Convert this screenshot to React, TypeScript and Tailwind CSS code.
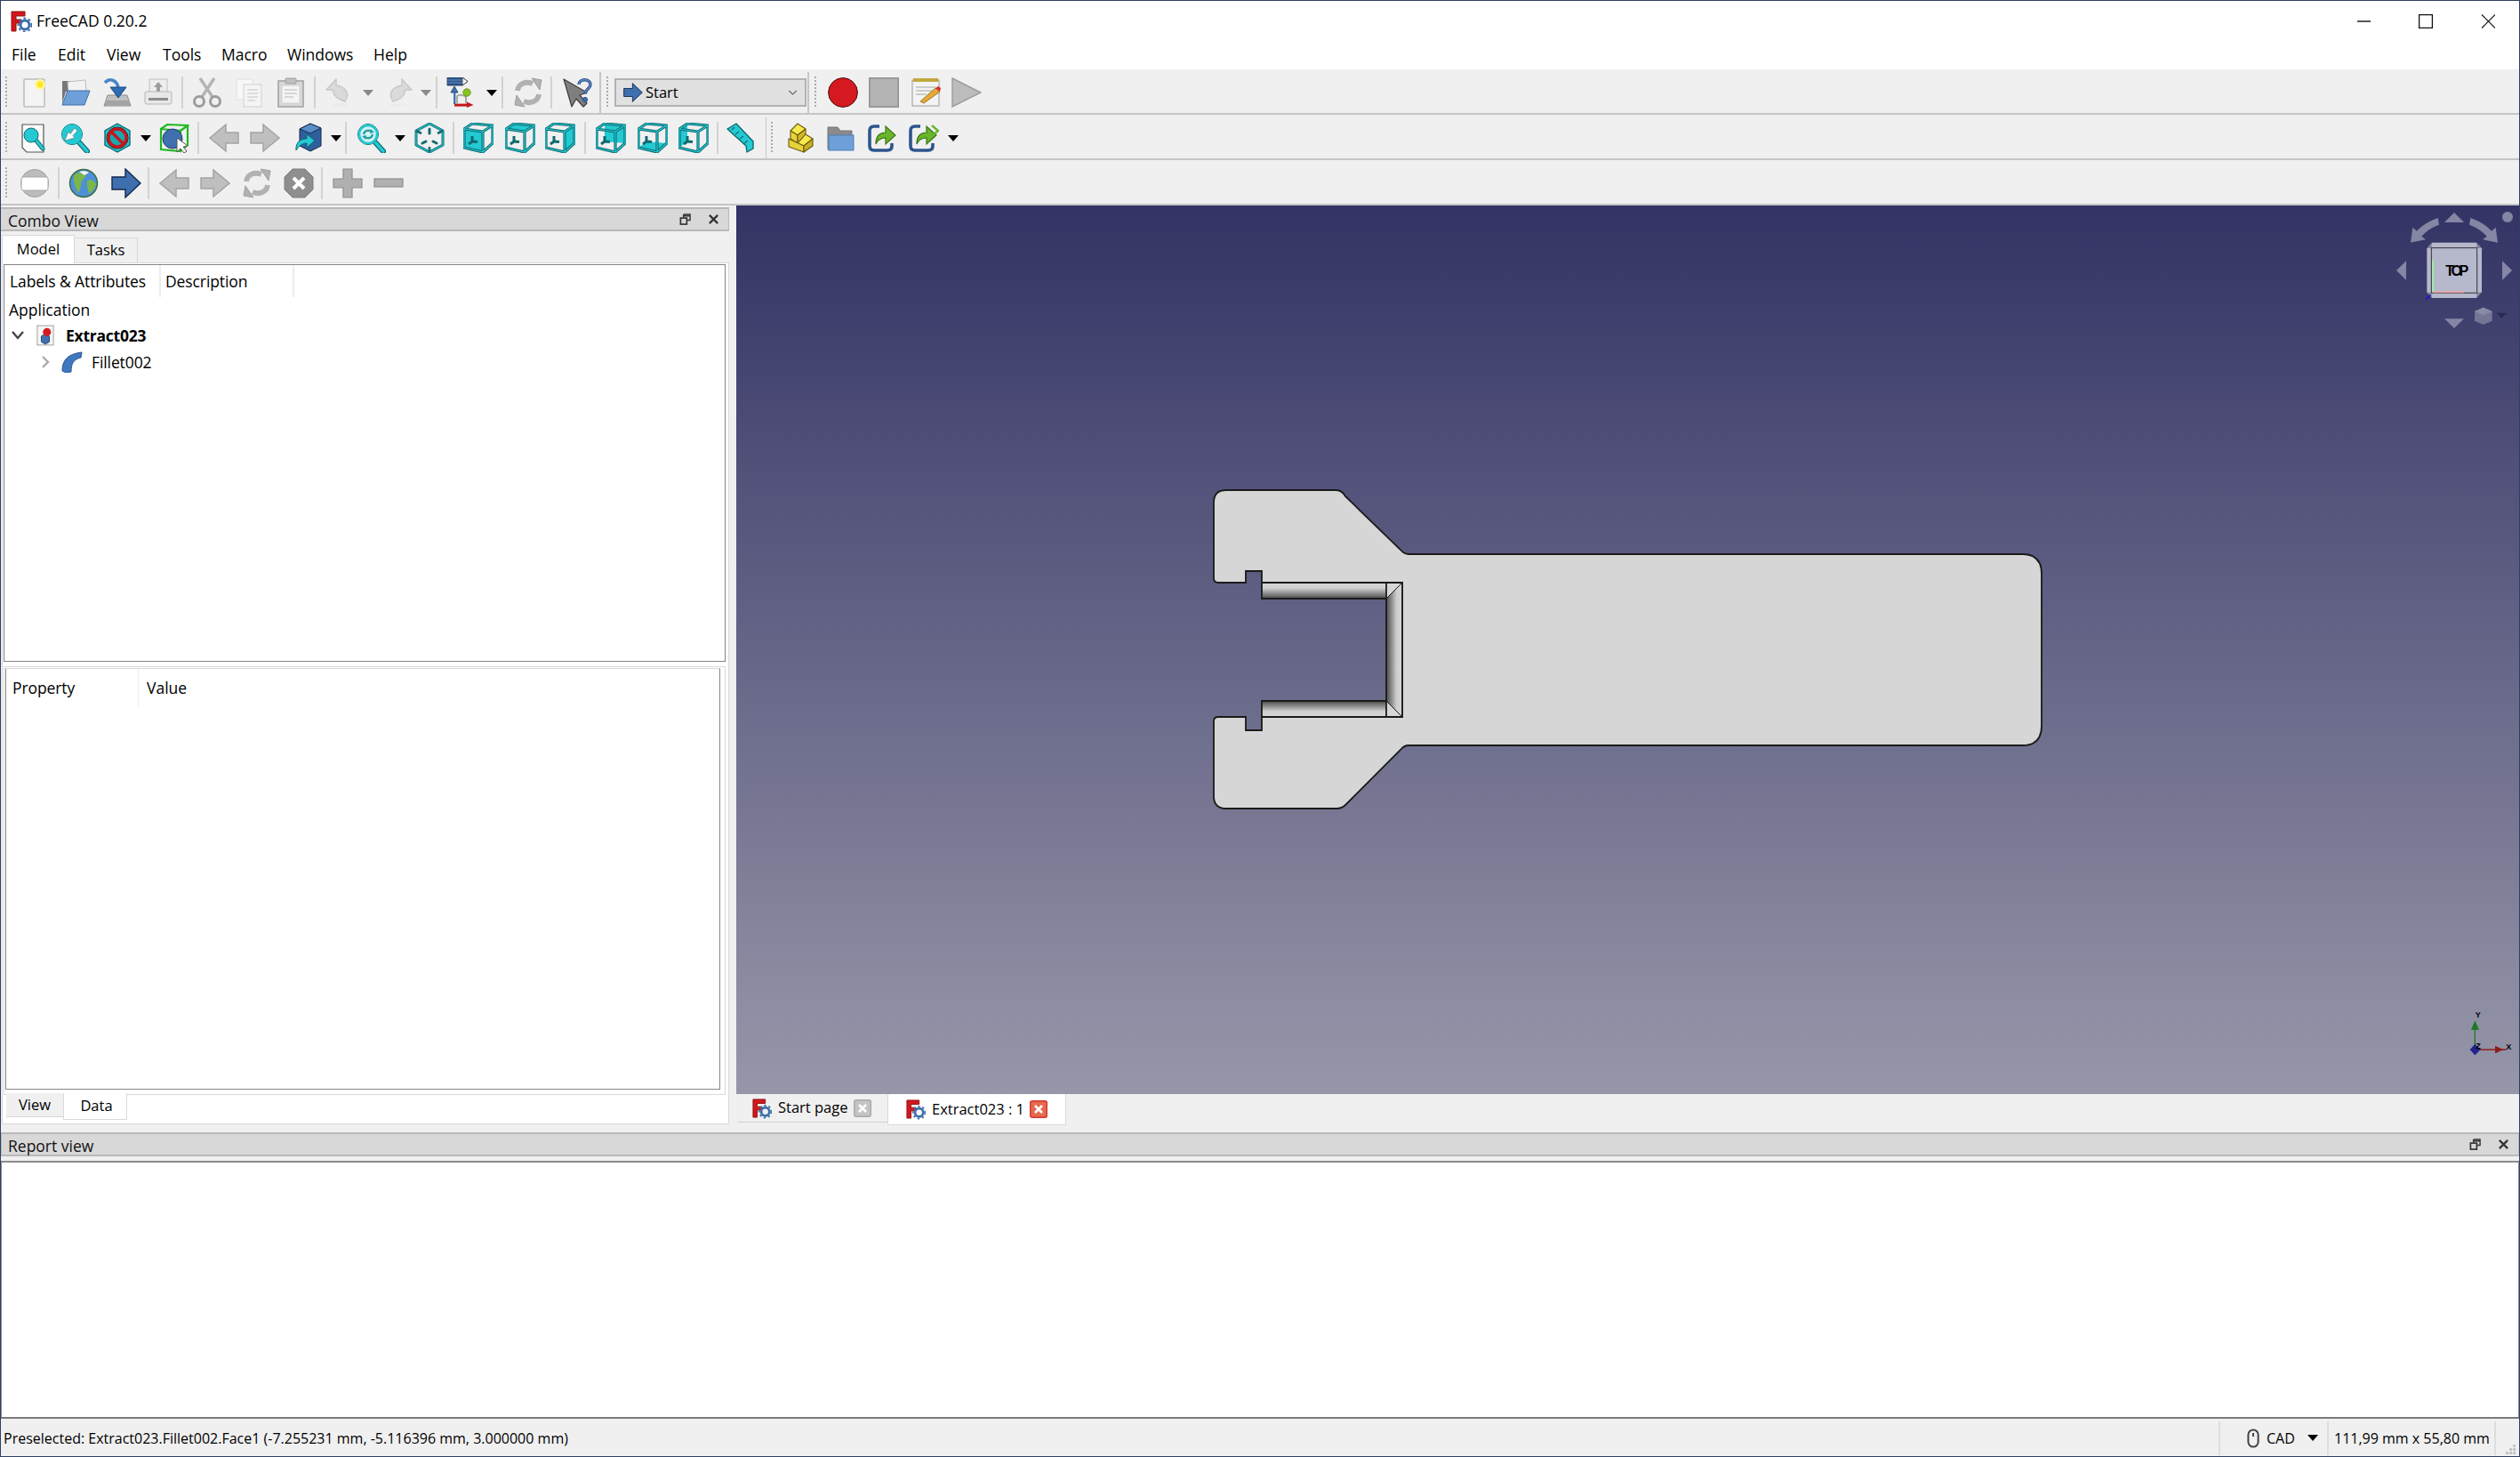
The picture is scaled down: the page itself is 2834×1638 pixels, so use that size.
import React from 'react';

const TEAL = '#24c9d2';
const TEAL_DARK = '#0f6a70';

const Ic = ({ children }: { children: React.ReactNode }) => (
  <svg viewBox="0 0 34 34" className="w-[34px] h-[34px] shrink-0">
    {children}
  </svg>
);

// toolbar slot, widths are set per item so icon centers line up
const Tool = ({ className, children }: { className: string; children?: React.ReactNode }) => (
  <div className={`flex items-center justify-center shrink-0 ${className}`}>{children}</div>
);

const Sep = ({ className }: { className: string }) => (
  <div className={`flex justify-center shrink-0 ${className}`}>
    <div className="w-[2px] h-[36px] bg-[#d2d2d2]" />
  </div>
);

const Handle = ({ className }: { className: string }) => (
  <div
    className={`w-[2px] h-[36px] shrink-0 bg-[repeating-linear-gradient(to_bottom,#aaaaaa_0,#aaaaaa_2px,transparent_2px,transparent_4px)] ${className}`}
  />
);

const Drop = ({ gray }: { gray?: boolean }) => (
  <svg viewBox="0 0 12 7" className="w-[12px] h-[7px]">
    <polygon points="0,0 12,0 6,7" fill={gray ? '#8a8a8a' : '#000'} />
  </svg>
);

const Logo = ({ small }: { small?: boolean }) => (
  <svg viewBox="0 0 24 24" className={small ? 'w-[22px] h-[24px] shrink-0' : 'w-[24px] h-[24px] shrink-0'}>
    <polygon points="1,1 16,1 16,6 6,6 6,10 12,10 12,14 6,14 6,23 1,23" fill="#d4161c" stroke="#8c1014" strokeWidth="1" />
    <circle cx="16" cy="16" r="5" fill="none" stroke="#3d6ea8" strokeWidth="3" />
    <circle cx="16" cy="16" r="7.5" fill="none" stroke="#3d6ea8" strokeWidth="2" strokeDasharray="2.6 3" />
  </svg>
);

// oblique wire cube used by the standard view buttons
const ViewCube = ({ face }: { face: 'front' | 'top' | 'right' | 'rear' | 'bottom' | 'left' }) => {
  const faces = {
    front: '1,7 22,10 22,33 1,28',
    top: '1,7 10,1 33,3 22,10',
    right: '22,10 33,3 33,23 22,33',
    rear: '10,1 33,3 33,23 10,21',
    bottom: '1,28 10,21 33,23 22,33',
    left: '1,7 10,1 10,21 1,28',
  };
  const edges = 'M1 7 L22 10 L22 33 L1 28 Z M1 7 L10 1 L33 3 L22 10 M33 3 L33 23 L22 33';
  const inner = 'M10 21 L6 24 M10 21 L10 15 M10 21 L16 21.6';
  return (
    <Ic>
      <polygon points={faces[face]} fill={TEAL} />
      <path d={inner} fill="none" stroke={TEAL_DARK} strokeWidth="3" />
      <path d={edges} fill="none" stroke={TEAL_DARK} strokeWidth="3.2" strokeLinejoin="round" />
      <path d={edges} fill="none" stroke={TEAL} strokeWidth="1.2" strokeLinejoin="round" />
    </Ic>
  );
};

const IsoCube = () => (
  <Ic>
    <path d="M17 1 L32 9 L32 25 L17 33 L2 25 L2 9 Z" fill="none" stroke={TEAL_DARK} strokeWidth="3" strokeLinejoin="round" />
    <path d="M17 1 L32 9 L32 25 L17 33 L2 25 L2 9 Z" fill="none" stroke={TEAL} strokeWidth="1.2" />
    <path d="M2 9 L8 12 M32 9 L26 12 M17 33 V27" stroke={TEAL_DARK} strokeWidth="2.6" />
    <path d="M17 7 V12 M9 23 L13 21 M21 21 L25 23" stroke={TEAL_DARK} strokeWidth="3" strokeLinecap="round" />
  </Ic>
);

const Magnifier = ({ lens, children }: { lens: string; children?: React.ReactNode }) => (
  <Ic>
    <path d="M22 22 L31 32" stroke={TEAL_DARK} strokeWidth="6" strokeLinecap="round" />
    <path d="M22 22 L31 32" stroke={TEAL} strokeWidth="3.4" strokeLinecap="round" />
    <circle cx="14" cy="13" r="11.5" fill={lens} stroke={TEAL_DARK} strokeWidth="1" />
    <circle cx="14" cy="13" r="10" fill="none" stroke={TEAL} strokeWidth="2.6" />
    {children}
  </Ic>
);

const GrayArrow = ({ flip }: { flip?: boolean }) => (
  <Ic>
    <g transform={flip ? 'matrix(-1 0 0 1 34 0)' : undefined}>
      <polygon points="1,17 19,2 19,11 33,11 33,23 19,23 19,32" fill="#bfbfbf" stroke="#a4a4a4" strokeWidth="1.5" />
    </g>
  </Ic>
);

const Curl = ({ flip }: { flip?: boolean }) => (
  <Ic>
    <g transform={flip ? 'matrix(-1 0 0 1 34 0)' : undefined}>
      <ellipse cx="17" cy="31" rx="11" ry="2" fill="#ececec" />
      <path d="M13 2 L2 14 L9 14 C10 21 15 25 23 27 C28 20 26 11 13 9 Z" fill="#dadada" stroke="#c8c8c8" strokeWidth="1.5" strokeLinejoin="round" />
    </g>
  </Ic>
);

const Cycle = () => (
  <Ic>
    <path d="M5 15 C6 7 14 4 22 7" fill="none" stroke="#b2b2b2" strokeWidth="6" />
    <polygon points="21,1 32,3 30,14" fill="#b2b2b2" stroke="#9f9f9f" />
    <path d="M29 19 C28 27 20 30 12 27" fill="none" stroke="#b2b2b2" strokeWidth="6" />
    <polygon points="13,33 2,31 4,20" fill="#b2b2b2" stroke="#9f9f9f" />
  </Ic>
);

const BlueArrow = ({ size }: { size?: string }) => (
  <svg viewBox="0 0 34 34" className={size ?? 'w-[34px] h-[34px] shrink-0'}>
    <polygon points="1,10 16,10 16,1 33,17 16,33 16,24 1,24" fill="#3f6fae" stroke="#12294d" strokeWidth="1.4" />
  </svg>
);

const FolderIcon = () => (
  <Ic>
    <path d="M3 30 V5 H14 L17 9 H30 V30 Z" fill="#8b8b8b" stroke="#777" />
    <rect x="4" y="14" width="28" height="17" fill="#6f9fd8" stroke="#4f7fb8" />
  </Ic>
);

const LinkIcon = ({ more }: { more?: boolean }) => (
  <Ic>
    <path d="M13 4 H7 Q2 4 2 9 V26 Q2 31 7 31 H22 Q27 31 27 26 V23" fill="none" stroke="#2c568c" strokeWidth="3.6" />
    <path d="M9 24 C9 14 14 11 20 11 L20 4 L31 14 L20 24 L20 17 C15 17 11 19 9 24 Z" fill="#69b52d" stroke="#3c7412" strokeWidth="1.2" />
    {more && <path d="M26 3 L33 9 L26 15" fill="none" stroke="#69b52d" strokeWidth="2.4" />}
  </Ic>
);

const Row1 = () => (
  <div className="flex h-[51px] pt-[3px] border-b-2 border-[#c6c6c6] bg-[#f0f0f0] items-center">
    <div className="flex items-center w-[674px] h-full">
      <Handle className="ml-[6px]" />
      {/* file */}
      <Tool className="ml-[8px] w-[46px]">
        <Ic>
          <rect x="5" y="2" width="23" height="31" fill="#f4f4f4" stroke="#bcbcbc" strokeWidth="1.5" rx="1" />
          <circle cx="23" cy="8" r="6" fill="#fff7a0" />
          <circle cx="23" cy="8" r="3.6" fill="#ffe81e" />
        </Ic>
      </Tool>
      <Tool className="w-[46px]">
        <Ic>
          <path d="M2 29 V4 H10 L12 7 H26 V16 H6 Z" fill="#777" />
          <polygon points="8,5 28,3 29,16 9,16" fill="#f2f2f2" stroke="#bbb" />
          <polygon points="8,15 33,15 27,31 2,31" fill="#6f9fd8" stroke="#3f6fa8" />
        </Ic>
      </Tool>
      <Tool className="w-[47px]">
        <Ic>
          <polygon points="6,20 28,20 32,32 2,32" fill="#c0c0c0" stroke="#8c8c8c" />
          <rect x="3" y="26" width="28" height="6" fill="#a4a4a4" />
          <path d="M3 6 C8 0 16 3 18 11" fill="none" stroke="#4a86c8" strokeWidth="3.6" />
          <polygon points="9,11 27,11 18,23" fill="#2f6ab4" stroke="#1e4a86" />
        </Ic>
      </Tool>
      <Tool className="w-[46px]">
        <Ic>
          <rect x="7" y="2" width="20" height="16" fill="#ededed" stroke="#c0c0c0" />
          <polygon points="17,5 12,11 15,11 15,16 19,16 19,11 22,11" fill="#9c9c9c" />
          <rect x="2" y="16" width="30" height="14" rx="2" fill="#e8e8e8" stroke="#b4b4b4" />
          <rect x="6" y="23" width="22" height="3" fill="#8c8c8c" />
        </Ic>
      </Tool>
      <Sep className="w-[8px]" />
      <Tool className="w-[48px]">
        <Ic>
          <path d="M9 1 L23 22 M25 1 L11 22" stroke="#b4b4b4" strokeWidth="3.4" />
          <ellipse cx="8" cy="27" rx="5.5" ry="5.5" fill="none" stroke="#9c9c9c" strokeWidth="3" />
          <ellipse cx="26" cy="27" rx="5.5" ry="5.5" fill="none" stroke="#9c9c9c" strokeWidth="3" />
        </Ic>
      </Tool>
      <Tool className="w-[46px]">
        <Ic>
          <rect x="3" y="2" width="18" height="23" fill="#f7f7f7" stroke="#e0e0e0" />
          <rect x="11" y="8" width="20" height="25" fill="#f4f4f4" stroke="#d0d0d0" />
          <path d="M15 14 H27 M15 18 H27 M15 22 H27 M15 26 H24" stroke="#d4d4d4" strokeWidth="1.4" />
        </Ic>
      </Tool>
      <Tool className="w-[47px]">
        <Ic>
          <rect x="3" y="4" width="28" height="29" fill="#d8d8d8" stroke="#a4a4a4" strokeWidth="1.6" />
          <rect x="7" y="9" width="20" height="20" fill="#f4f4f4" stroke="#d0d0d0" />
          <rect x="11" y="1" width="12" height="6" rx="1" fill="#c0c0c0" stroke="#a0a0a0" />
          <path d="M10 14 H24 M10 18 H24 M10 22 H20" stroke="#cccccc" strokeWidth="1.4" />
        </Ic>
      </Tool>
      <Sep className="w-[8px]" />
      <Tool className="w-[48px]"><Curl /></Tool>
      <Tool className="w-[16px]"><Drop gray /></Tool>
      <Tool className="w-[51px]"><Curl flip /></Tool>
      <Tool className="w-[12px]"><Drop gray /></Tool>
      <Sep className="w-[12px]" />
      <Tool className="w-[38px]">
        <Ic>
          <polygon points="4,0 21,0 27,4.5 21,9 4,9" fill="#2c568c" stroke="#16325a" strokeWidth="0.8" />
          <polygon points="21,0 27,4.5 21,9" fill="#f4f4f4" stroke="#333" strokeWidth="0.8" />
          <path d="M4 3 H21 M4 6 H21" stroke="#7aa0d0" strokeWidth="0.8" />
          <polygon points="12,10 8,17 16,17" fill="#3f74b4" stroke="#16325a" strokeWidth="0.8" />
          <rect x="11" y="17" width="2.4" height="13" fill="#3f74b4" />
          <path d="M15 29 V22 C15 19 22 19 25 22 L25 29" fill="none" stroke="#a8a8a8" strokeWidth="2" />
          <circle cx="26" cy="17" r="4.2" fill="#86c51e" stroke="#5a8c10" strokeWidth="0.8" />
          <rect x="12" y="29.6" width="15" height="3" fill="#c4161c" />
          <polygon points="26,27.5 33.5,31 26,34" fill="#c4161c" />
        </Ic>
      </Tool>
      <Tool className="ml-[10px] w-[16px]"><Drop /></Tool>
      <Sep className="w-[8px]" />
      <Tool className="ml-[2px] w-[46px]"><Cycle /></Tool>
      <Sep className="w-[6px]" />
      <Tool className="ml-[3px] w-[46px]">
        <Ic>
          <polygon points="2,2 11,33 16,24 24,33 28,29 20,20 28,17" fill="#7f7f7f" stroke="#3d3d3d" strokeWidth="1.2" strokeLinejoin="round" />
          <path d="M19 8 C19 1 32 1 32 8 C32 13 26 13 26 19" fill="none" stroke="#2a5088" strokeWidth="3.4" />
          <path d="M19 8 C19 1 32 1 32 8 C32 13 26 13 26 19" fill="none" stroke="#5a8cc8" strokeWidth="1.4" />
          <circle cx="26" cy="25" r="2.6" fill="#3f6fae" stroke="#2a5088" />
        </Ic>
      </Tool>
    </div>
    <div className="w-[2px] h-full bg-[#c6c6c6]" />
    <div className="flex items-center w-[232px] h-full">
      <Handle className="ml-[6px]" />
      <div className="ml-[7px] w-[216px] h-[32px] border-2 border-[#b2b2b2] bg-[#e1e1e1] flex items-center">
        <div className="ml-[8px]"><BlueArrow size="w-[22px] h-[22px] shrink-0" /></div>
        <span className="ml-[3px] text-[16.5px] text-black">Start</span>
        <svg viewBox="0 0 12 7" className="ml-auto mr-[8px] w-[11px] h-[6px]">
          <path d="M1 1 L6 6 L11 1" fill="none" stroke="#555" strokeWidth="1.2" />
        </svg>
      </div>
    </div>
    <div className="w-[2px] h-full bg-[#c6c6c6]" />
    <div className="flex items-center flex-1 h-full">
      <Handle className="ml-[6px]" />
      <Tool className="ml-[7px] w-[46px]">
        <Ic>
          <circle cx="17" cy="17" r="16.4" fill="#d41a20" stroke="#4c0a0c" strokeWidth="1" />
        </Ic>
      </Tool>
      <Tool className="w-[46px]">
        <Ic>
          <rect x="0.8" y="0.8" width="32.4" height="32.4" fill="#b4b4b4" stroke="#8a8a8a" strokeWidth="1.4" />
        </Ic>
      </Tool>
      <Tool className="w-[47px]">
        <Ic>
          <rect x="2" y="3" width="30" height="29" fill="#f4f4f4" stroke="#9a9a9a" />
          <rect x="3" y="1" width="28" height="4" fill="#c4a840" />
          <path d="M6 11 H28 M6 15 H24 M6 19 H18" stroke="#c0c0c0" strokeWidth="1.4" />
          <polygon points="11,27 28,12 33,16 15,29" fill="#e8a838" stroke="#8c6010" strokeWidth="0.8" />
          <polygon points="28,12 33,16 34,12 31,10" fill="#d43030" />
        </Ic>
      </Tool>
      <Tool className="w-[46px]">
        <Ic>
          <polygon points="1,1 33,17 1,33" fill="#bcbcbc" stroke="#9c9c9c" strokeWidth="1.4" />
        </Ic>
      </Tool>
    </div>
  </div>
);

const Row2 = () => (
  <div className="flex h-[51px] pt-[3px] border-b-2 border-[#c6c6c6] bg-[#f0f0f0] items-center">
    <div className="flex items-center w-[861px] h-full">
      <Handle className="ml-[6px]" />
      <Tool className="ml-[6px] w-[46px]">
        <Ic>
          <polygon points="5,2 29,2 29,33 10,33 5,28" fill="#fafafa" stroke="#555" strokeWidth="1.2" />
          <path d="M20 19 L28 29" stroke={TEAL_DARK} strokeWidth="5" strokeLinecap="round" />
          <path d="M20 19 L28 29" stroke={TEAL} strokeWidth="3" strokeLinecap="round" />
          <circle cx="15" cy="14" r="8" fill={TEAL} stroke={TEAL_DARK} />
        </Ic>
      </Tool>
      <Tool className="w-[48px]">
        <Magnifier lens={TEAL}>
          <polygon points="6,20 10,10 12,12.5 17,6 20,9 15,14.5 17,17" fill="#fff" stroke="#666" strokeWidth="0.6" />
        </Magnifier>
      </Tool>
      <Tool className="w-[48px]">
        <Ic>
          <polygon points="17,1 31,9 31,25 17,33 3,25 3,9" fill={TEAL} stroke={TEAL_DARK} strokeWidth="1.4" />
          <circle cx="17" cy="17" r="12" fill="none" stroke="#2a1010" strokeWidth="1" />
          <circle cx="17" cy="17" r="10" fill="#1aa8b0" stroke="#c4161c" strokeWidth="3.4" />
          <path d="M10 10 L24 24" stroke="#c4161c" strokeWidth="3.4" />
        </Ic>
      </Tool>
      <Tool className="w-[16px]"><Drop /></Tool>
      <Tool className="w-[48px]">
        <Ic>
          <path d="M2 7 L24 9 L24 32 L2 30 Z M2 7 L9 2 L32 3 L24 9 M32 3 L32 25 L24 32" fill="none" stroke="#1fb81f" strokeWidth="2.2" />
          <circle cx="15" cy="18" r="11" fill="#3f6fae" stroke="#1e3f70" />
          <polygon points="20,17 20,33 24,29 28,34 31,32 27,27 32,26" fill="#fff" stroke="#555" />
        </Ic>
      </Tool>
      <Sep className="w-[6px]" />
      <Tool className="w-[52px]"><GrayArrow /></Tool>
      <Tool className="w-[40px]"><GrayArrow flip /></Tool>
      <Tool className="ml-[5px] w-[46px]">
        <Ic>
          <polygon points="8,7 20,1 32,6 32,26 20,32 8,26" fill="#2f5f9c" stroke="#12294d" />
          <polygon points="8,7 20,12 32,6 20,1" fill="#5a8cc8" stroke="#12294d" />
          <path d="M4 31 C3 21 10 18 16 18 L16 13 L25 20 L16 28 L16 23 C11 23 7 26 4 31 Z" fill={TEAL} stroke={TEAL_DARK} />
        </Ic>
      </Tool>
      <Tool className="ml-[1px] w-[16px]"><Drop /></Tool>
      <Sep className="w-[6px]" />
      <Tool className="w-[50px]">
        <Magnifier lens="#d5f4f6">
          <path d="M9 13 C10 8 15 8 18 10 M19 13 C18 18 13 18 10 16" fill="none" stroke="#2aa0a8" strokeWidth="2.4" />
          <polygon points="17,7 21,11 16,12" fill="#2aa0a8" />
          <polygon points="11,19 7,15 12,14" fill="#2aa0a8" />
        </Magnifier>
      </Tool>
      <Tool className="w-[16px]"><Drop /></Tool>
      <Tool className="w-[50px]"><IsoCube /></Tool>
      <Sep className="w-[4px]" />
      <Tool className="w-[52px]"><ViewCube face="front" /></Tool>
      <Tool className="w-[42px]"><ViewCube face="top" /></Tool>
      <Tool className="w-[48px]"><ViewCube face="right" /></Tool>
      <Sep className="w-[8px]" />
      <Tool className="w-[50px]"><ViewCube face="rear" /></Tool>
      <Tool className="w-[43px]"><ViewCube face="bottom" /></Tool>
      <Tool className="w-[50px]"><ViewCube face="left" /></Tool>
      <Sep className="w-[4px]" />
      <Tool className="w-[48px]">
        <Ic>
          <polygon points="2,7 12,1 31,21 31,29 24,33 23,26" fill={TEAL} stroke={TEAL_DARK} strokeWidth="1.4" strokeLinejoin="round" />
          <path d="M10 5 L7 8 M15 10 L11 13 M20 15 L16 18 M25 20 L21 23" stroke={TEAL_DARK} strokeWidth="1.2" />
        </Ic>
      </Tool>
    </div>
    <div className="w-[1px] h-full bg-[#c6c6c6]" />
    <div className="flex items-center flex-1 h-full">
      <Handle className="ml-[5px]" />
      <Tool className="ml-[8px] w-[46px]">
        <Ic>
          <g transform="translate(3 0)" stroke="#6b5c10" strokeWidth="1.1" strokeLinejoin="round">
            <polygon points="3,9 11,1 20,7 11,14" fill="#f8e94e" />
            <polygon points="3,9 11,14 11,23 3,18" fill="#e8d23a" />
            <polygon points="11,14 20,7 20,13 11,23" fill="#d0b82a" />
            <polygon points="11,23 20,13 28,18 18,26" fill="#f8e94e" />
            <polygon points="1,18 18,26 18,33 1,27" fill="#e8d23a" />
            <polygon points="18,26 28,18 28,26 18,33" fill="#c8ae22" />
          </g>
        </Ic>
      </Tool>
      <Tool className="w-[44px]"><FolderIcon /></Tool>
      <Tool className="w-[52px]"><LinkIcon /></Tool>
      <Tool className="w-[40px]"><LinkIcon more /></Tool>
      <Tool className="w-[26px]"><Drop /></Tool>
    </div>
  </div>
);

const Row3 = () => (
  <div className="flex h-[51px] pt-[3px] border-b-2 border-[#c6c6c6] bg-[#f0f0f0] items-center">
    <Handle className="ml-[6px]" />
    <Tool className="ml-[8px] w-[46px]">
      <Ic>
        <circle cx="17" cy="17" r="15.5" fill="#bcbcbc" stroke="#a0a0a0" />
        <rect x="2" y="10" width="30" height="15" rx="2" fill="#fff" stroke="#a8a8a8" />
      </Ic>
    </Tool>
    <Sep className="w-[8px]" />
    <Tool className="w-[48px]">
      <Ic>
        <circle cx="17" cy="17" r="15.5" fill="#4f8fd8" stroke="#3a6a3a" strokeWidth="1.4" />
        <path d="M6 8 C11 4 16 4 19 6 C20 11 16 12 14 16 C15 20 12 26 11 28 C8 22 5 16 6 8 Z" fill="#7ab648" />
        <path d="M21 14 C26 12 30 14 31 19 C29 24 26 27 23 29 C22 24 20 19 21 14 Z" fill="#7ab648" />
        <path d="M12 4 C16 3 20 3 23 5 L18 8 Z" fill="#f0f4f8" />
      </Ic>
    </Tool>
    <Tool className="w-[48px]"><BlueArrow /></Tool>
    <Sep className="w-[2px]" />
    <Tool className="w-[56px]"><GrayArrow /></Tool>
    <Tool className="w-[36px]"><GrayArrow flip /></Tool>
    <Tool className="w-[58px]"><Cycle /></Tool>
    <Tool className="w-[36px]">
      <Ic>
        <polygon points="10,1 24,1 33,10 33,24 24,33 10,33 1,24 1,10" fill="#8e8e8e" stroke="#7c7c7c" />
        <path d="M11 11 L23 23 M23 11 L11 23" stroke="#fff" strokeWidth="4" />
      </Ic>
    </Tool>
    <Sep className="w-[16px]" />
    <Tool className="w-[42px]">
      <Ic>
        <polygon points="12,1 22,1 22,12 33,12 33,22 22,22 22,33 12,33 12,22 1,22 1,12 12,12" fill="#b0b0b0" stroke="#8e8e8e" strokeWidth="1.2" />
      </Ic>
    </Tool>
    <Tool className="w-[50px]">
      <Ic>
        <rect x="1" y="12" width="32" height="9" fill="#b0b0b0" stroke="#8e8e8e" strokeWidth="1.2" />
      </Ic>
    </Tool>
  </div>
);

const DockButtons = () => (
  <div className="flex items-center gap-[19px]">
    <svg viewBox="0 0 14 14" className="w-[13px] h-[13px]">
      <path d="M5 1 H13 V8 H9 M5 1 V5 M5 3 H13" fill="none" stroke="#333" strokeWidth="1.5" />
      <rect x="1.5" y="5.5" width="7.5" height="7.5" fill="none" stroke="#333" strokeWidth="1.8" />
    </svg>
    <svg viewBox="0 0 14 14" className="w-[13px] h-[13px]">
      <path d="M2 2 L12 12 M12 2 L2 12" stroke="#333" strokeWidth="2.4" />
    </svg>
  </div>
);

const LeftDock = () => (
  <div className="w-[828px] shrink-0 flex flex-col pt-[2px] pr-[8px]">
    <div className="h-[27px] border-y-2 border-x border-[#b9b9b9] bg-[#d8d8d8] flex items-center justify-between pl-[8px] pr-[10px]">
      <span className="pt-[3px] text-[17.5px] text-[#111]">Combo View</span>
      <DockButtons />
    </div>
    <div className="mt-[4px] pl-[2px] h-[31px] flex items-end text-[16.5px] text-black">
      <div className="w-[82px] h-[32px] -mb-px relative bg-white border-x border-t border-[#d9d9d9] flex items-center justify-center">Model</div>
      <div className="w-[71px] h-[28px] bg-[#f0f0f0] border-r border-t border-[#d9d9d9] flex items-center justify-center">Tasks</div>
    </div>
    <div className="ml-[2px] w-[818px] h-[969px] bg-white border border-[#d9d9d9] pl-[1px] pt-[1px] flex flex-col">
      <div className="w-[812px] h-[447px] border border-[#858585] flex flex-col text-[17.5px] text-black">
        <div className="h-[36px] flex items-center">
          <div className="w-[176px] pl-[6px] h-full flex items-center border-r-2 border-[#ececec] tracking-[-0.1px]">Labels &amp; Attributes</div>
          <div className="w-[150px] pl-[5px] h-full flex items-center border-r-2 border-[#ececec] tracking-[-0.1px]">Description</div>
        </div>
        <div className="h-[28px] pl-[5px] flex items-center">Application</div>
        <div className="h-[30px] flex items-center">
          <svg viewBox="0 0 14 10" className="ml-[8px] w-[14px] h-[10px]">
            <path d="M1 1 L7 8 L13 1" fill="none" stroke="#444" strokeWidth="2.4" />
          </svg>
          <svg viewBox="0 0 22 26" className="ml-[14px] w-[20px] h-[24px]">
            <rect x="1" y="1" width="20" height="24" fill="#f6f6f6" stroke="#999" />
            <polygon points="6,14 11,11 16,14 16,21 11,24 6,21" fill="#3f6fae" stroke="#1e3f70" />
            <circle cx="13" cy="9" r="5" fill="#d41a20" />
          </svg>
          <span className="ml-[13px] font-bold tracking-[-0.25px]">Extract023</span>
        </div>
        <div className="h-[30px] flex items-center">
          <svg viewBox="0 0 10 14" className="ml-[41px] w-[10px] h-[14px]">
            <path d="M2 1 L8 7 L2 13" fill="none" stroke="#aaa" strokeWidth="2.4" />
          </svg>
          <svg viewBox="0 0 24 24" className="ml-[13px] w-[24px] h-[24px]">
            <path d="M1 22 C1 10 7 3 23 1 L22 7 C14 9 11 13 11 23 L5 24 Z" fill="#3f78c0" stroke="#2c568c" />
          </svg>
          <span className="ml-[10px] tracking-[-0.1px]">Fillet002</span>
        </div>
      </div>
      <div className="mt-[5px] w-[812px] h-[482px] border border-[#d9d9d9] pl-[1px] pt-[1px]">
        <div className="w-[804px] h-[474px] border border-[#858585] border-t-[#d9d9d9] text-[17.5px] text-black">
          <div className="h-[42px] flex items-center">
            <div className="w-[149px] pl-[7px] h-full flex items-center border-r border-[#ececec] tracking-[-0.1px]">Property</div>
            <div className="pl-[9px]">Value</div>
          </div>
        </div>
      </div>
      <div className="flex items-start pl-[3px] text-[16.5px] text-black -mt-[2px]">
        <div className="w-[64px] h-[27px] bg-[#f0f0f0] border-b border-[#d9d9d9] flex items-center justify-center">View</div>
        <div className="w-[72px] h-[30px] pl-[3px] bg-white border-x border-b border-[#d9d9d9] flex items-center justify-center">Data</div>
      </div>
    </div>
  </div>
);

const Viewport = () => (
  <div className="relative h-[999px] overflow-hidden bg-[linear-gradient(to_bottom,#333365,#9797aa)]">
    {/* model, page coordinates in the viewBox */}
    <svg viewBox="1350 540 960 380" className="absolute left-[522px] top-[309px] w-[960px] h-[380px]">
      <defs>
        <linearGradient id="bandTop" x1="0" y1="0" x2="0" y2="1">
          <stop offset="0" stopColor="#d6d6d6" />
          <stop offset="0.35" stopColor="#cfcfcf" />
          <stop offset="1" stopColor="#4a4a4a" />
        </linearGradient>
        <linearGradient id="bandBottom" x1="0" y1="1" x2="0" y2="0">
          <stop offset="0" stopColor="#d6d6d6" />
          <stop offset="0.35" stopColor="#cfcfcf" />
          <stop offset="1" stopColor="#4a4a4a" />
        </linearGradient>
        <linearGradient id="bandRight" x1="1" y1="0" x2="0" y2="0">
          <stop offset="0" stopColor="#d6d6d6" />
          <stop offset="0.35" stopColor="#cfcfcf" />
          <stop offset="1" stopColor="#4a4a4a" />
        </linearGradient>
      </defs>
      <path
        d="M1379 551 H1503 Q1509 551 1513 558 L1575 618 Q1579 623 1584 623 H2274 Q2296 623 2296 645 V816 Q2296 838 2274 838 H1584 Q1579 838 1575 843 L1513 905 Q1509 909 1503 909 H1379 Q1365 909 1365 895 V811 Q1365 806 1370 806 H1401 V821 H1419 V806 H1577 V655 H1419 V642 H1401 V655 H1370 Q1365 655 1365 650 V565 Q1365 551 1379 551 Z"
        fill="#d6d6d6"
        stroke="#1a1a1a"
        strokeWidth="1.8"
      />
      <rect x="1419" y="655" width="140" height="18" fill="url(#bandTop)" />
      <rect x="1419" y="788" width="140" height="18" fill="url(#bandBottom)" />
      <polygon points="1559,655 1577,655 1559,673" fill="#d6d6d6" />
      <polygon points="1559,806 1577,806 1559,788" fill="#d6d6d6" />
      <polygon points="1559,673 1577,655 1577,806 1559,788" fill="url(#bandRight)" />
      <path
        d="M1419 655 V673 H1559 V788 H1419 V806 M1419 655 H1577 V806 H1419 M1559 655 V673 M1559 788 V806"
        fill="none"
        stroke="#1a1a1a"
        strokeWidth="1.8"
      />
      <path d="M1559 673 L1577 655 M1559 788 L1577 806" stroke="#1a1a1a" strokeWidth="1" />
    </svg>

    {/* navigation cube */}
    <svg viewBox="0 33 522 507" className="absolute left-[1832px] top-0 w-[174px] h-[169px]">
      <g fill="#8585a4">
        <polygon points="300,57 267,90 333,90" />
        <polygon points="267,415 333,415 300,447" />
        <polygon points="138,220 105,252 138,285" />
        <polygon points="462,220 495,252 462,285" />
        <path d="M245 75 L249 98 C225 107 205 120 190 137 L204 148 L153 158 L160 107 L174 119 C192 100 216 85 245 75 Z" />
        <path d="M355 75 L351 98 C375 107 395 120 410 137 L396 148 L447 158 L440 107 L426 119 C408 100 384 85 355 75 Z" />
        <circle cx="480" cy="72" r="18" />
      </g>
      <polygon points="225,158 375,158 393,178 393,325 375,345 225,345 208,325 208,178" fill="#b6b8cc" />
      <polygon points="208,178 225,158 223,176" fill="#7f7f9c" />
      <polygon points="393,178 375,158 377,176" fill="#7f7f9c" />
      <polygon points="208,325 225,345 223,328" fill="#7f7f9c" />
      <polygon points="393,325 375,345 377,328" fill="#7f7f9c" />
      <rect x="223" y="176" width="154" height="152" fill="none" stroke="#333" strokeWidth="3" />
      <path d="M228 218 V325" stroke="#a6eaa6" strokeWidth="6" />
      <path d="M228 325 H333" stroke="#e8a8ac" strokeWidth="6" />
      <path d="M205 350 L220 335" stroke="#1414d4" strokeWidth="5" />
      <text x="305" y="271" textAnchor="middle" fontSize="48" fontWeight="700" letterSpacing="-10" fill="#000" fontFamily="'Liberation Sans', sans-serif">TOP</text>
      <polygon points="398,377 428,390 428,422 398,435 369,422 369,390" fill="#757596" />
      <polygon points="369,390 398,377 428,390 398,403" fill="#8a8aa8" />
      <polygon points="443,395 478,395 460,413" fill="#2c2c50" />
    </svg>

    {/* axis cross */}
    <svg viewBox="960 100 222 180" className="absolute left-[1932px] top-[902px] w-[74px] h-[60px]">
      <path d="M1030 241 V150" stroke="#1e7a1e" strokeWidth="4" />
      <polygon points="1017,174 1044,174 1030,143" fill="#1e7a1e" />
      <path d="M1030 241 H1135" stroke="#8c1c1c" strokeWidth="4" />
      <polygon points="1098,228 1098,254 1126,241" fill="#8c1c1c" />
      <polygon points="1030,222 1049,241 1030,260 1013,241" fill="#22228c" />
      <text x="1040" y="134" textAnchor="middle" fontSize="27" fontWeight="700" fill="#000" fontFamily="'Liberation Sans', sans-serif">Y</text>
      <text x="1144" y="240" textAnchor="middle" fontSize="27" fontWeight="700" fill="#000" fontFamily="'Liberation Sans', sans-serif">X</text>
      <text x="1041" y="238" textAnchor="middle" fontSize="27" fontWeight="700" fill="#000" fontFamily="'Liberation Sans', sans-serif">Z</text>
    </svg>
  </div>
);

const MdiClose = ({ active }: { active?: boolean }) => (
  <svg viewBox="0 0 20 20" className="w-[20px] h-[20px] shrink-0">
    <rect x="0.7" y="0.7" width="18.6" height="18.6" rx="2" fill={active ? '#e46a50' : '#c4c4c4'} stroke={active ? '#d8352a' : '#a8a8a8'} strokeWidth="1.4" />
    <path d="M6 6 L14 14 M14 6 L6 14" stroke="#fff" strokeWidth="2.6" />
  </svg>
);

const MdiTabs = () => (
  <div className="flex items-start h-[35px] pl-[2px] text-[16.5px] text-black">
    <div className="w-[168px] h-[32px] border-b border-[#d0d0d0] flex items-center pl-[16px]">
      <Logo small />
      <span className="ml-[7px]">Start page</span>
      <div className="ml-[6px]"><MdiClose /></div>
    </div>
    <div className="w-[201px] h-[35px] bg-white border-x border-b border-[#d9d9d9] flex items-center pl-[20px]">
      <Logo small />
      <span className="ml-[7px]">Extract023 : 1</span>
      <div className="ml-[6px]"><MdiClose active /></div>
    </div>
  </div>
);

const ReportView = () => (
  <>
    <div className="mx-[1px] h-[27px] border-y-2 border-x border-[#b9b9b9] bg-[#d8d8d8] flex items-center justify-between pl-[7px] pr-[10px]">
      <span className="pt-[3px] text-[17.5px] text-[#111]">Report view</span>
      <DockButtons />
    </div>
    <div className="h-[5px]" />
    <div className="h-[288px] bg-white border-t-2 border-x-2 border-[#8a8a8a]" />
  </>
);

const StatusBar = () => (
  <div className="h-[45px] border-t-2 border-[#7a7a7a] bg-[#f0f0f0] flex items-center text-[16px] text-black">
    <div className="flex-1 pl-[4px] whitespace-nowrap">
      Preselected: Extract023.Fillet002.Face1 (-7.255231 mm, -5.116396 mm, 3.000000 mm)
    </div>
    <div className="w-[122px] h-[38px] border-l-2 border-[#dedede] flex items-center pl-[30px]">
      <svg viewBox="0 0 14 22" className="w-[14px] h-[22px] shrink-0">
        <rect x="1.4" y="1.4" width="11.2" height="19.2" rx="5.5" fill="none" stroke="#444" strokeWidth="2" />
        <path d="M7 5 V9" stroke="#444" strokeWidth="2" />
      </svg>
      <span className="ml-[8px]">CAD</span>
      <div className="ml-[14px] flex"><Drop /></div>
    </div>
    <div className="w-[188px] h-[38px] border-l-2 border-[#dedede] flex items-center pl-[6px] whitespace-nowrap">111,99 mm x 55,80 mm</div>
    <div className="w-[29px] h-[38px] border-l-2 border-[#dedede] flex items-end justify-end pr-[4px]">
      <svg viewBox="0 0 12 12" className="w-[12px] h-[12px]">
        <g fill="#c4c4c4">
          <rect x="8" y="0" width="3" height="3" />
          <rect x="4" y="4" width="3" height="3" />
          <rect x="8" y="4" width="3" height="3" />
          <rect x="0" y="8" width="3" height="3" />
          <rect x="4" y="8" width="3" height="3" />
          <rect x="8" y="8" width="3" height="3" />
        </g>
      </svg>
    </div>
  </div>
);

export default function App() {
  return (
    <div className="relative w-[2834px] h-[1638px] overflow-hidden flex flex-col bg-[#f0f0f0] font-['Open_Sans',sans-serif]">
      {/* title bar */}
      <div className="h-[44px] bg-white flex items-center pl-[12px] pt-[3px]">
        <Logo />
        <span className="ml-[5px] text-[17.5px] text-black">FreeCAD 0.20.2</span>
        <div className="ml-auto flex items-center h-full pr-[28px]">
          <svg viewBox="0 0 155 16" className="w-[155px] h-[16px]">
            <path d="M0 8 H15" stroke="#111" strokeWidth="1.4" />
            <rect x="69.6" y="0.6" width="14.8" height="14.8" fill="none" stroke="#111" strokeWidth="1.3" />
            <path d="M140 0.5 L155 15.5 M155 0.5 L140 15.5" stroke="#111" strokeWidth="1.1" />
          </svg>
        </div>
      </div>
      {/* menu */}
      <div className="h-[34px] bg-white flex items-center pl-[13px] text-[17.5px] text-black">
        <span className="w-[52px]">File</span>
        <span className="w-[55px]">Edit</span>
        <span className="w-[63px]">View</span>
        <span className="w-[66px]">Tools</span>
        <span className="w-[74px]">Macro</span>
        <span className="w-[97px]">Windows</span>
        <span>Help</span>
      </div>
      <Row1 />
      <Row2 />
      <Row3 />
      <div className="flex h-[1042px]">
        <LeftDock />
        <div className="flex-1 flex flex-col">
          <Viewport />
          <MdiTabs />
        </div>
      </div>
      <ReportView />
      <StatusBar />
      {/* window frame */}
      <div className="absolute inset-0 pointer-events-none border border-[#2f4060]" />
    </div>
  );
}
